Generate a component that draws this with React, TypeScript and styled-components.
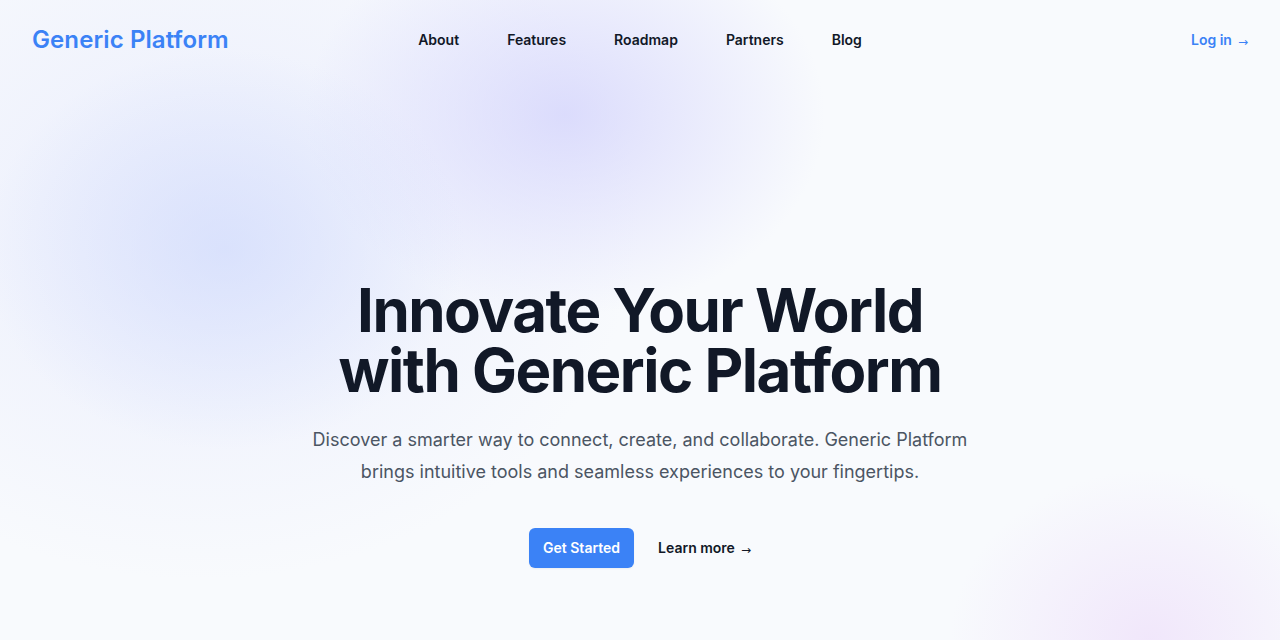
import React from "react";
import styled, { createGlobalStyle } from "styled-components";

const Global = createGlobalStyle`
  * { box-sizing: border-box; }
  html, body { margin: 0; padding: 0; }
  body {
    font-family: Inter, "Noto Sans", "Liberation Sans", sans-serif;
    -webkit-font-smoothing: antialiased;
    background: #f8fafd;
  }
`;

const Page = styled.div`
  position: relative;
  min-height: 100vh;
  overflow: hidden;
  background:
    radial-gradient(ellipse 240px 200px at 225px 250px, rgba(210, 220, 252, 0.7), rgba(210, 220, 252, 0) 100%),
    radial-gradient(ellipse 260px 200px at 565px 115px, rgba(210, 210, 252, 0.75), rgba(210, 210, 252, 0) 100%),
    radial-gradient(ellipse 440px 360px at 200px 220px, rgba(228, 232, 252, 0.7), rgba(228, 232, 252, 0) 100%),
    radial-gradient(ellipse 200px 170px at 1150px 640px, rgba(238, 224, 250, 0.75), rgba(238, 224, 250, 0) 100%),
    #f8fafd;
`;

const Header = styled.header`
  display: flex;
  align-items: center;
  justify-content: space-between;
  padding: 24px 32px;
  height: 80px;
`;

const Side = styled.div<{ $end?: boolean }>`
  flex: 1;
  display: flex;
  justify-content: ${(p) => (p.$end ? "flex-end" : "flex-start")};
`;

const Logo = styled.a`
  font-size: 24px;
  line-height: 32px;
  font-weight: 600;
  letter-spacing: 0.004em;
  color: #3b82f6;
  text-decoration: none;
`;

const NavLinks = styled.nav`
  display: flex;
  gap: 48px;
`;

const NavLink = styled.a`
  font-size: 14px;
  line-height: 24px;
  font-weight: 600;
  color: #111827;
  text-decoration: none;
`;

const LoginLink = styled(NavLink)`
  color: #3b82f6;
`;

const Arrow = styled.span`
  margin-left: 6px;
  font-family: "DejaVu Sans", sans-serif;
  font-size: 12px;
  line-height: 0;
  font-weight: 400;
  vertical-align: -1px;
`;

const Hero = styled.main`
  max-width: 672px;
  margin: 0 auto;
  padding-top: 200px;
  text-align: center;
`;

const Title = styled.h1`
  margin: 0;
  font-size: 60px;
  line-height: 60px;
  font-weight: 700;
  letter-spacing: -0.025em;
  color: #111827;
`;

const Lead = styled.p`
  margin: 24px 0 0;
  font-size: 18px;
  line-height: 32px;
  color: #4b5563;
`;

const Actions = styled.div`
  margin-top: 40px;
  display: flex;
  align-items: center;
  justify-content: center;
  gap: 24px;
`;

const Primary = styled.a`
  display: inline-block;
  background: #3b82f6;
  color: #ffffff;
  font-size: 14px;
  line-height: 20px;
  font-weight: 600;
  padding: 10px 14px;
  border-radius: 6px;
  box-shadow: 0 1px 2px rgba(0, 0, 0, 0.05);
  text-decoration: none;
`;

const Secondary = styled.a`
  font-size: 14px;
  line-height: 24px;
  font-weight: 600;
  color: #111827;
  text-decoration: none;
`;

export default function App() {
  return (
    <>
      <Global />
      <Page>
        <Header>
          <Side>
            <Logo href="#">Generic Platform</Logo>
          </Side>
          <NavLinks>
            {["About", "Features", "Roadmap", "Partners", "Blog"].map((l) => (
              <NavLink key={l} href="#">
                {l}
              </NavLink>
            ))}
          </NavLinks>
          <Side $end>
            <LoginLink href="#">
              Log in<Arrow aria-hidden>→</Arrow>
            </LoginLink>
          </Side>
        </Header>
        <Hero>
          <Title>
            Innovate Your World
            <br />
            with Generic Platform
          </Title>
          <Lead>
            Discover a smarter way to connect, create, and collaborate. Generic Platform brings intuitive tools and
            seamless experiences to your fingertips.
          </Lead>
          <Actions>
            <Primary href="#">Get Started</Primary>
            <Secondary href="#">
              Learn more<Arrow aria-hidden>→</Arrow>
            </Secondary>
          </Actions>
        </Hero>
      </Page>
    </>
  );
}
